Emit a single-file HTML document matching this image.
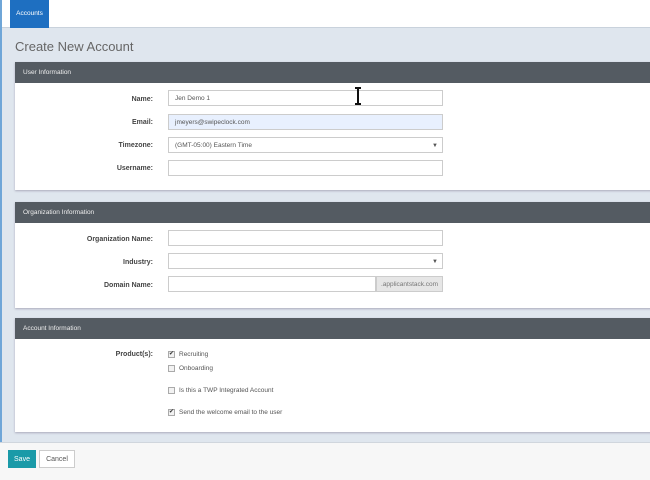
<!DOCTYPE html>
<html><head><meta charset="utf-8"><style>
*{box-sizing:border-box;margin:0;padding:0}
body{width:650px;height:480px;overflow:hidden;background:#dfe6ee;font-family:"Liberation Sans",sans-serif;position:relative;font-size:7px;color:#333}
.top{position:absolute;left:0;top:0;width:650px;height:28px;background:#fff;border-bottom:1px solid #c9d2dc}
.tab{position:absolute;left:10px;top:0;width:39px;height:28px;background:#1e6fc1;color:#fff;font-size:6.5px;line-height:28px;text-align:center}
.lb{position:absolute;left:0;top:0;width:2px;height:442px;background:#6fa6d8}
h1{position:absolute;left:15px;top:39px;font-weight:normal;font-size:13px;color:#666}
.panel{position:absolute;left:15px;width:640px;background:#fff;box-shadow:0 1px 2px #aab}
.ph{height:21px;background:#545b62;color:#eee;font-size:6.5px;line-height:21px;padding-left:8px}
.lab{position:absolute;width:138px;text-align:right;font-weight:bold;font-size:7px;color:#444}
.in{position:absolute;left:153px;width:275px;height:16px;border:1px solid #ccc;background:#fff;font-size:6.5px;line-height:16px;padding-left:6px;color:#555}
.cb{position:absolute;left:153px;width:7px;height:7px;border:1px solid #aaa;background:#f2f2f2;font-size:6px;line-height:5px}
.ct{position:absolute;left:164px;font-size:6.5px;color:#555}
.foot{position:absolute;left:0;top:442px;width:650px;height:38px;background:#f7f7f7;border-top:1px solid #d0d6dd}
.btn{position:absolute;top:450px;height:18px;font-size:7px;line-height:17px;text-align:center;border:1px solid #ccc}
</style></head><body>
<div class="top"><div class="tab">Accounts</div></div>
<div class="lb"></div>
<h1>Create New Account</h1>
<div class="panel" style="top:62px;height:128px"><div class="ph">User Information</div>
<div class="lab" style="top:34px">Name:</div><div class="in" style="top:28px">Jen Demo 1</div>
<div class="lab" style="top:57px">Email:</div><div class="in" style="top:52px;background:#e8f0fe">jmeyers@swipeclock.com</div>
<div class="lab" style="top:80px">Timezone:</div><div class="in" style="top:75px">(GMT-05:00) Eastern Time<span style="position:absolute;right:4px;font-size:6px">▼</span></div>
<div class="lab" style="top:103px">Username:</div><div class="in" style="top:98px"></div>
<svg style="position:absolute;left:338px;top:25px" width="10" height="18" viewBox="0 0 10 18"><path d="M2 1h6M5 1v16M2 17h6" stroke="#111" stroke-width="2" fill="none"/></svg>
</div>
<div class="panel" style="top:202px;height:106px"><div class="ph">Organization Information</div>
<div class="lab" style="top:34px">Organization Name:</div><div class="in" style="top:28px"></div>
<div class="lab" style="top:57px">Industry:</div><div class="in" style="top:51px"><span style="position:absolute;right:4px;font-size:6px">▼</span></div>
<div class="lab" style="top:80px">Domain Name:</div><div class="in" style="top:74px;width:208px"></div>
<div class="in" style="top:74px;left:361px;width:67px;background:#e6e6e6;color:#777;padding-left:4px">.applicantstack.com</div>
</div>
<div class="panel" style="top:318px;height:114px"><div class="ph">Account Information</div>
<div class="lab" style="top:33px">Product(s):</div>
<div class="cb" style="top:33px">✔</div><div class="ct" style="top:33px">Recruiting</div>
<div class="cb" style="top:47px"></div><div class="ct" style="top:47px">Onboarding</div>
<div class="cb" style="top:69px"></div><div class="ct" style="top:69px">Is this a TWP Integrated Account</div>
<div class="cb" style="top:91px">✔</div><div class="ct" style="top:91px">Send the welcome email to the user</div>
</div>
<div class="foot"></div>
<div class="btn" style="left:8px;width:28px;background:#1a9aa8;border-color:#1a9aa8;color:#fff">Save</div>
<div class="btn" style="left:39px;width:36px;background:#fff;color:#555">Cancel</div>
</body></html>
